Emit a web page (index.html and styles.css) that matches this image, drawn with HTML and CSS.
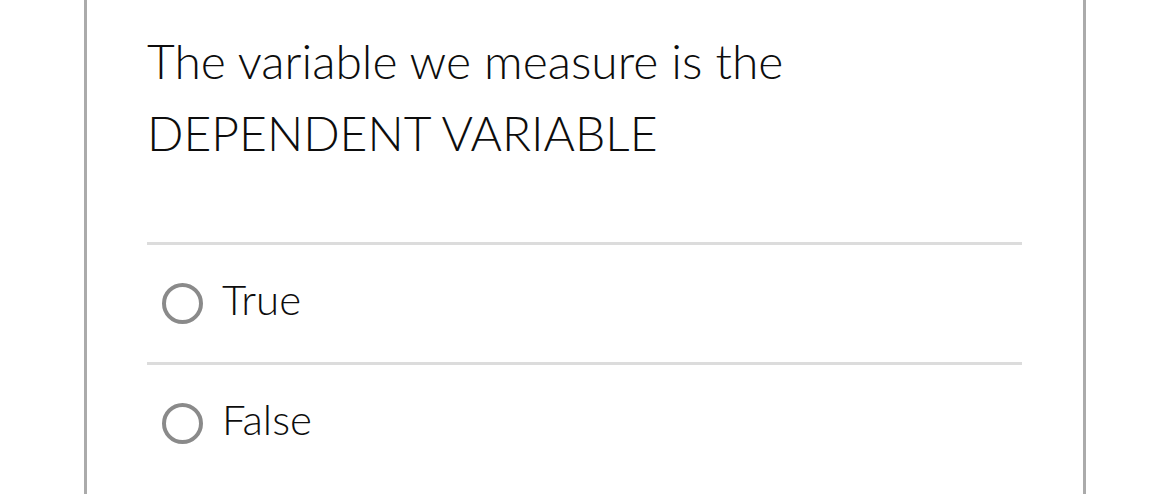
FILE: index.html
```html
<!DOCTYPE html>
<html>
<head>
<meta charset="utf-8">
<link rel="stylesheet" href="styles.css">
</head>
<body>
<div class="card">
  <div class="question">The variable we measure is the<br>DEPENDENT VARIABLE</div>
  <div class="options">
    <label class="option"><span class="radio"></span><span class="label">True</span></label>
    <label class="option"><span class="radio"></span><span class="label">False</span></label>
  </div>
</div>
</body>
</html>
```
FILE: styles.css
```css
html, body {
  margin: 0;
  padding: 0;
  background: #ffffff;
  height: 494px;
  overflow: hidden;
}
body {
  font-family: Lato, "Liberation Sans", sans-serif;
  font-weight: 300;
  color: #0d0d0d;
}
.card {
  margin-left: 84px;
  width: 1002px;
  height: 494px;
  border-left: 3px solid #ababab;
  border-right: 3px solid #ababab;
  padding: 25px 61px 0 60px;
  box-sizing: border-box;
}
.question {
  font-size: 48px;
  line-height: 72px;
  padding-bottom: 73px;
}
.options {
  border-top: 3px solid #dcdcdc;
}
.option {
  display: flex;
  align-items: center;
  height: 117px;
  padding-left: 15px;
  border-bottom: 3px solid #dcdcdc;
}
.option:last-child {
  border-bottom: none;
}
.radio {
  width: 33px;
  height: 33px;
  border: 4px solid #8a8a8a;
  border-radius: 50%;
  flex: none;
}
.label {
  font-size: 42px;
  margin-left: 19px;
  padding-bottom: 10px;
}
```
